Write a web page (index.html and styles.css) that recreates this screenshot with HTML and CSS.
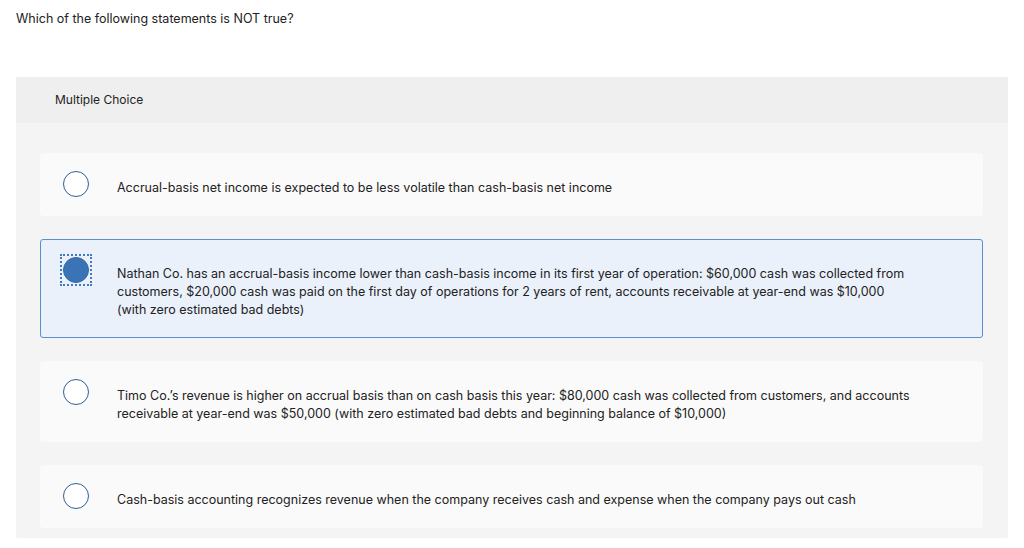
FILE: index.html
```html
<!DOCTYPE html>
<html>
<head>
<meta charset="utf-8">
<link rel="stylesheet" href="styles.css">
</head>
<body>
<p class="question">Which of the following statements is NOT true?</p>
<div class="panel">
  <div class="panel-head">Multiple Choice</div>
  <div class="options">
    <div class="option">
      <span class="radio-wrap"><span class="radio"></span></span>
      <div class="text">Accrual-basis net income is expected to be less volatile than cash-basis net income</div>
    </div>
    <div class="option selected">
      <span class="radio-wrap focus"><span class="radio checked"></span></span>
      <div class="text">Nathan Co. has an accrual-basis income lower than cash-basis income in its first year of operation: $60,000 cash was collected from customers, $20,000 cash was paid on the first day of operations for 2 years of rent, accounts receivable at year-end was $10,000 (with zero estimated bad debts)</div>
    </div>
    <div class="option">
      <span class="radio-wrap"><span class="radio"></span></span>
      <div class="text">Timo Co.’s revenue is higher on accrual basis than on cash basis this year: $80,000 cash was collected from customers, and accounts receivable at year-end was $50,000 (with zero estimated bad debts and beginning balance of $10,000)</div>
    </div>
    <div class="option">
      <span class="radio-wrap"><span class="radio"></span></span>
      <div class="text">Cash-basis accounting recognizes revenue when the company receives cash and expense when the company pays out cash</div>
    </div>
  </div>
</div>
</body>
</html>
```

FILE: styles.css
```css
html, body {
  margin: 0;
  padding: 0;
  background: #ffffff;
}
body {
  font-family: Inter, "Noto Sans", sans-serif;
  color: #222222;
  font-size: 12.5px;
  padding: 0 16px;
}
.question {
  margin: 0;
  padding-top: 10px;
  line-height: 18px;
  height: 67px;
}
.panel {
  background: #f4f4f4;
  border-radius: 2px;
  padding-bottom: 10px;
}
.panel-head {
  background: #efefef;
  height: 46px;
  line-height: 46px;
  padding-left: 39px;
  font-size: 12px;
  border-radius: 2px 2px 0 0;
}
.options {
  display: flex;
  flex-direction: column;
  gap: 23px;
  padding: 30px 25px 0 24px;
}
.option {
  display: flex;
  align-items: flex-start;
  background: #fafafa;
  border: 1px solid #fafafa;
  border-radius: 3px;
  padding: 25px 70px 18px 0;
}
.option.selected {
  background: #eaf1fb;
  border-color: #5b8ed1;
}
.radio-wrap {
  flex: none;
  width: 32px;
  height: 32px;
  margin: -11px 25px -6px 19px;
  display: flex;
  align-items: center;
  justify-content: center;
  box-sizing: border-box;
  border: 2px dotted transparent;
}
.radio-wrap.focus {
  border-color: #3f7bc4;
}
.radio {
  width: 26px;
  height: 26px;
  box-sizing: border-box;
  border: 1.5px solid #2e5f97;
  border-radius: 50%;
  background: #ffffff;
}
.radio.checked {
  background: #3b74b6;
  border-color: #34689f;
}
.text {
  line-height: 18px;
}
```
